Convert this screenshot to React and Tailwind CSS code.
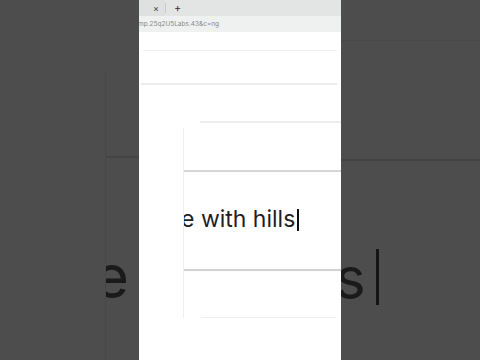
import React from 'react';

const sans = { fontFamily: 'Inter, "Noto Sans", sans-serif' };

function LeftBlur() {
  return (
    <div className="w-[139px] h-full bg-[#4d4d4d] overflow-hidden">
      <div className="ml-[105px] mt-[72px] h-[288px] border-l border-[#474747] overflow-hidden">
        <div className="h-[86px] border-b-2 border-[#444444]" />
        <div className="mt-[88px] -ml-[12px] text-[60px] leading-none text-[#1a1a1a]" style={sans}>e</div>
      </div>
    </div>
  );
}

function RightBlur() {
  return (
    <div className="w-[139px] h-full bg-[#4d4d4d] overflow-hidden">
      <div className="mt-[40px] h-px bg-[#484848]" />
      <div className="mt-[118px] h-[2px] bg-[#444444]" />
      <div className="mt-[88px] -ml-[6px] flex items-end gap-[10px]">
        <span className="text-[58px] leading-none text-[#1a1a1a]" style={sans}>s</span>
        <span className="w-[3px] h-[56px] bg-[#151515] mb-[2px]" />
      </div>
    </div>
  );
}

function Phone() {
  return (
    <div className="w-[202px] h-full bg-white overflow-hidden flex flex-col" style={sans}>
      {/* tab strip */}
      <div className="h-[16px] bg-[#e3e5e4] flex items-center shrink-0">
        <div className="w-[26px] h-full bg-[#dfe1e0] flex items-center justify-end pr-[6px]">
          <span className="text-[9px] leading-none text-[#444]">×</span>
        </div>
        <div className="w-px h-[10px] bg-[#c8caca]" />
        <span className="ml-[8px] text-[11px] leading-none text-[#333]">+</span>
      </div>
      {/* address */}
      <div className="h-[16px] bg-[#eff1f1] flex items-center shrink-0 overflow-hidden">
        <span className="text-[6.5px] leading-none text-[#888] whitespace-nowrap -ml-[1px]">mp.25q2U5Labs.43&c=ng</span>
      </div>
      <div className="h-[18px] shrink-0" />
      <div className="mx-[4px] h-px bg-[#efefef] shrink-0" />
      <div className="h-[32px] shrink-0" />
      <div className="ml-[2px] mr-[4px] h-[2px] bg-[#ececec] shrink-0" />
      <div className="h-[36px] shrink-0" />
      <div className="ml-[61px] h-[2px] bg-[#eeeeee] shrink-0" />
      {/* card */}
      <div className="ml-[44px] mt-[5px] border-l border-[#efefef] flex flex-col h-[190px]">
        <div className="h-[42px]" />
        <div className="h-[2px] bg-[#d6d6d6]" />
        <div className="h-[59px] flex items-end overflow-hidden">
          <div className="-ml-[3px] flex items-end text-[23px] leading-none text-[#1f1f1f] whitespace-nowrap">
            <span>e with hills</span>
            <span className="w-[2px] h-[24px] bg-[#111] ml-[2px] -mb-[2px]" />
          </div>
        </div>
        <div className="h-[38px]" />
        <div className="h-[2px] bg-[#d2d2d2]" />
        <div className="h-[46px]" />
        <div className="ml-[17px] mr-[5px] h-px bg-[#eeeeee]" />
      </div>
    </div>
  );
}

export default function App() {
  return (
    <div className="w-[480px] h-[360px] flex bg-[#4d4d4d] overflow-hidden">
      <LeftBlur />
      <Phone />
      <RightBlur />
    </div>
  );
}
